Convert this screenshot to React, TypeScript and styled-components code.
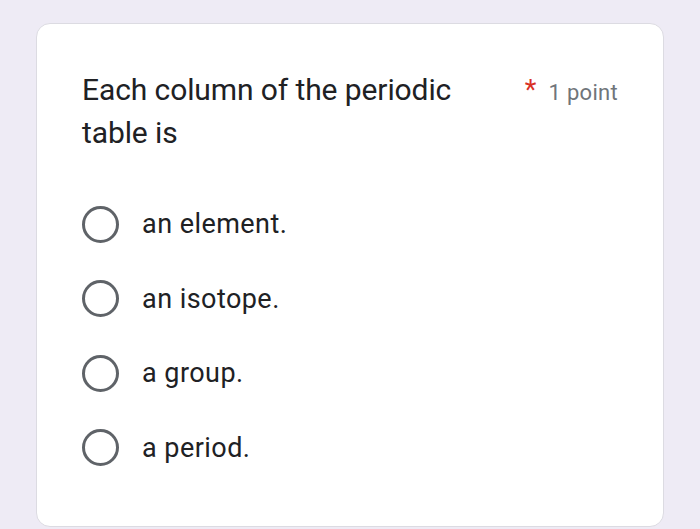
import React from "react";
import styled, { createGlobalStyle } from "styled-components";

const GlobalStyle = createGlobalStyle`
  html, body {
    margin: 0;
    padding: 0;
    background: #eeebf5;
    font-family: Roboto, "Noto Sans", Arial, sans-serif;
  }
`;

const Page = styled.div`
  height: 529px;
  overflow: hidden;
  padding: 23px 36px 0 36px;
  box-sizing: border-box;
`;

const Card = styled.div`
  background: #ffffff;
  border: 1px solid #dcdbe2;
  border-radius: 14px;
  height: 504px;
  box-sizing: border-box;
  padding: 44px 45px 0 45px;
`;

const Header = styled.div`
  display: flex;
  align-items: flex-start;
`;

const Title = styled.div`
  flex: 1;
  font-size: 30px;
  letter-spacing: -0.1px;
  line-height: 43px;
  color: #202124;
  padding-right: 24px;
`;

const Meta = styled.div`
  display: flex;
  align-items: flex-start;
  padding-top: 9px;
  white-space: nowrap;
`;

const Star = styled.span`
  color: #d93025;
  font-size: 27px;
  line-height: 26px;
  margin-right: 12px;
`;

const Points = styled.span`
  color: #70757a;
  font-size: 22px;
  letter-spacing: 0.3px;
  line-height: 26px;
  margin-top: 3px;
`;

const Options = styled.div`
  display: flex;
  flex-direction: column;
  margin-top: 33px;
`;

const Option = styled.label`
  display: flex;
  align-items: center;
  height: 74.5px;
  gap: 23px;
  cursor: pointer;
`;

const Radio = styled.span`
  width: 37px;
  height: 37px;
  box-sizing: border-box;
  border: 3.5px solid #5f6368;
  border-radius: 50%;
  flex-shrink: 0;
`;

const OptionText = styled.span`
  font-size: 27px;
  letter-spacing: 0.45px;
  color: #202124;
`;

const choices = ["an element.", "an isotope.", "a group.", "a period."];

const App: React.FC = () => {
  return (
    <>
      <GlobalStyle />
      <Page>
        <Card>
          <Header>
            <Title>Each column of the periodic table is</Title>
            <Meta>
              <Star>*</Star>
              <Points>1 point</Points>
            </Meta>
          </Header>
          <Options>
            {choices.map((c) => (
              <Option key={c}>
                <Radio />
                <OptionText>{c}</OptionText>
              </Option>
            ))}
          </Options>
        </Card>
      </Page>
    </>
  );
};

export default App;
